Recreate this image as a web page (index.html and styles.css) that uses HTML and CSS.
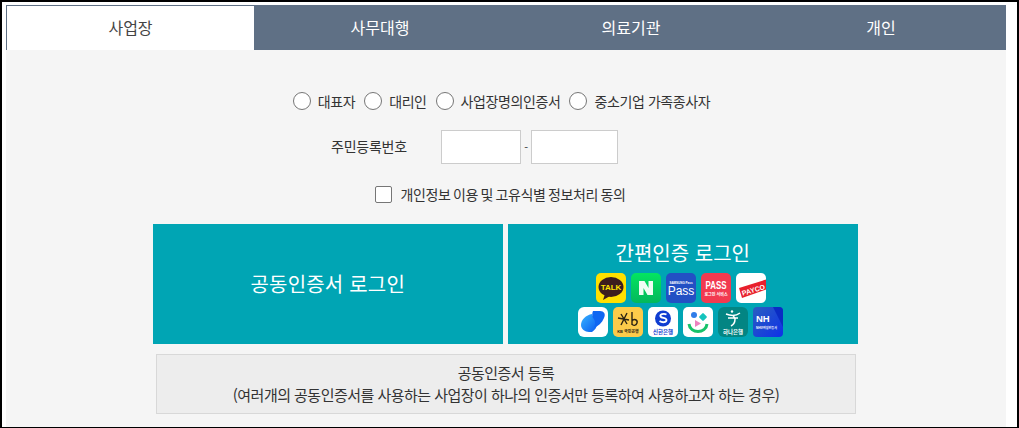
FILE: index.html
```html
<!DOCTYPE html>
<html lang="ko">
<head>
<meta charset="utf-8">
<title>로그인</title>
<link rel="stylesheet" href="styles.css">
</head>
<body>
<div class="frame">
  <div class="panel">
    <div class="tabs">
      <div class="tab active">사업장</div>
      <div class="tab">사무대행</div>
      <div class="tab">의료기관</div>
      <div class="tab">개인</div>
    </div>
    <div class="radios">
      <label class="radio"><input type="radio" name="r"><span>대표자</span></label>
      <label class="radio"><input type="radio" name="r"><span>대리인</span></label>
      <label class="radio"><input type="radio" name="r"><span>사업장명의인증서</span></label>
      <label class="radio"><input type="radio" name="r"><span>중소기업 가족종사자</span></label>
    </div>
    <div class="idrow">
      <span class="idlabel">주민등록번호</span>
      <span class="box b1"></span>
      <span class="dash">-</span>
      <span class="box b2"></span>
    </div>
    <label class="agree"><input type="checkbox"><span>개인정보 이용 및 고유식별 정보처리 동의</span></label>
    <div class="logins">
      <div class="login cert">공동인증서 로그인</div>
      <div class="login easy">
        <div class="easytitle">간편인증 로그인</div>
        <div class="icons">
          <svg class="ic" viewBox="0 0 30 30"><rect width="30" height="30" rx="5" fill="#fee000"/><ellipse cx="15" cy="14" rx="12.500" ry="10" fill="#3c1e1e"/><path d="M9 21l-2 6 7-4z" fill="#3c1e1e"/><text x="15" y="17" class="t9b y">TALK</text></svg>
          <svg class="ic" viewBox="0 0 30 30"><defs><linearGradient id="gn" x1="0" y1="0" x2="0" y2="1"><stop offset="0" stop-color="#03e560"/><stop offset="1" stop-color="#03b85c"/></linearGradient></defs><rect width="30" height="30" rx="5" fill="url(#gn)"/><path d="M8 8h5.500l4 7V8H22v14h-5.500l-4-7v7H8z" fill="#f0fdf4"/></svg>
          <svg class="ic" viewBox="0 0 30 30"><rect width="30" height="30" rx="5" fill="#2350c4"/><text x="15" y="10.500" class="t3 w">SAMSUNG Pass</text><text x="15" y="22" class="t11 w">Pass</text></svg>
          <svg class="ic" viewBox="0 0 30 30"><rect width="30" height="30" rx="5" fill="#f23a50"/><text x="15" y="16" class="t11n w" textLength="21" lengthAdjust="spacingAndGlyphs">PASS</text><text x="15" y="23" class="t4 w">로그인 서비스</text></svg>
          <svg class="ic" viewBox="0 0 30 30"><defs><clipPath id="cp"><rect width="30" height="30" rx="5"/></clipPath></defs><rect width="30" height="30" rx="5" fill="#fff"/><g clip-path="url(#cp)"><path d="M3 15L30 6.500v10L6 25z" fill="#e8202c"/><text x="17.500" y="19.500" class="t8b w" transform="rotate(-17 17.500 17)">PAYCO</text></g></svg>
        </div>
        <div class="icons">
          <svg class="ic" viewBox="0 0 30 30"><defs><linearGradient id="gt" x1="0" y1="0" x2="1" y2="1"><stop offset="0" stop-color="#38b4ff"/><stop offset="1" stop-color="#0a5cf0"/></linearGradient></defs><rect width="30" height="30" rx="6" fill="#fff"/><path d="M14 7C8 8 3 13 3 18c0 4 4 7 8 7h3c3-2 5-5 5-8 0-4-4-6-5-10z" fill="url(#gt)"/><path d="M15 4h7c4 0 6 3 4 7-2 5-6 8-10 10 2-5 1-8-1-10-1-2-1-5 0-7z" fill="#0f66f2"/></svg>
          <svg class="ic" viewBox="0 0 30 30"><rect width="30" height="30" rx="5" fill="#fccb4a"/><path d="M8 7l6 10M14 6L8 18M5 11l11 2M19 5v13M19 14c2-3 6-1 5 2s-4 3-5 1" fill="none" stroke="#2c2414" stroke-width="1.400"/><text x="15" y="26" class="t4 d">KB 국민은행</text></svg>
          <svg class="ic" viewBox="0 0 30 30"><rect width="30" height="30" rx="5" fill="#fff"/><circle cx="15" cy="11.500" r="8" fill="#0f3dd1"/><path d="M18.500 7.500c-3-1.500-7 0-6 2 1 2 6 1 6 3.500 0 2.500-4 3-7 1" fill="none" stroke="#fff" stroke-width="1.800"/><text x="15" y="26.500" class="t6 b">신한은행</text></svg>
          <svg class="ic" viewBox="0 0 30 30"><rect width="30" height="30" rx="5" fill="#fff"/><circle cx="11" cy="8" r="3" fill="#2f7de8"/><rect x="17" y="7" width="6" height="6" rx="1" fill="#15c4bd" transform="rotate(45 20 10)"/><path d="M12 13l6 3.500-6 3.500z" fill="#ee82c0"/><path d="M6 17c1 10 17 10 18 0" fill="none" stroke="#16c26a" stroke-width="3"/></svg>
          <svg class="ic" viewBox="0 0 30 30"><rect width="30" height="30" rx="6" fill="#038583"/><path d="M8 7c5 2 10 2 14-1M10 11h10M15 8l2 4c0 3-2 6-4 7" fill="none" stroke="#fff" stroke-width="1.500"/><circle cx="14" cy="4.500" r="1.200" fill="#fff"/><text x="15" y="27" class="t6 w">하나은행</text></svg>
          <svg class="ic" viewBox="0 0 30 30"><defs><linearGradient id="gh" x1="0" y1="0" x2="1" y2="1"><stop offset="0" stop-color="#2a5fc0"/><stop offset="1" stop-color="#0e30e8"/></linearGradient></defs><rect width="30" height="30" rx="4" fill="url(#gh)"/><path d="M20 0h6a4 4 0 0 1 4 4v16z" fill="#0a2cc4"/><text x="3" y="14.500" class="t10l w">NH</text><text x="3" y="21.500" class="t3l w">NH모바일인증서</text></svg>
        </div>
      </div>
    </div>
    <div class="register">
      <p>공동인증서 등록</p>
      <p>(여러개의 공동인증서를 사용하는 사업장이 하나의 인증서만 등록하여 사용하고자 하는 경우)</p>
    </div>
  </div>
</div>
</body>
</html>
```

FILE: styles.css
```css
* { box-sizing: border-box; }
html, body { margin: 0; padding: 0; background: #fff; }
body { font-family: "Noto Sans CJK KR", "Noto Sans", sans-serif; color: #333; }
.frame { width: 1019px; height: 428px; border: 2px solid #000; border-width: 2px 2px 1px 2px; padding: 3px 11px 0 4px; overflow: hidden; }
.panel { width: 1000px; height: 422px; background: #f5f5f5; display: flex; flex-direction: column; align-items: center; }
.tabs { display: flex; width: 100%; height: 45px; background: #5f7085; }
.tab { width: 250px; display: flex; align-items: center; justify-content: center; color: #fff; font-size: 16px; padding-bottom: 2px; }
.tab.active { width: 248px; background: #fff; color: #444; border: solid #5f7085; border-width: 1px 0 0 1px; }
.tab:nth-child(2) { width: 252px; }
.radios { display: flex; align-items: center; margin: 41px 9px 0 0; height: 20px; font-size: 14px; letter-spacing: -0.4px; }
.radio { display: flex; align-items: center; margin-right: 9px; }
.radio:last-child { margin-right: 0; }
.radio span { margin-left: 7px; }
input[type=radio], input[type=checkbox] { appearance: none; margin: 0; background: #fff; border: 1px solid #767676; }
input[type=radio] { width: 18px; height: 18px; border-radius: 50%; }
input[type=checkbox] { width: 17px; height: 17px; border-radius: 2px; }
.idrow { display: flex; align-items: center; align-self: flex-start; margin: 18px 0 0 325px; height: 35px; font-size: 14px; letter-spacing: -0.25px; }
.idlabel { width: 110px; padding-bottom: 2px; }
.box { display: block; height: 34px; background: #fff; border: 1px solid #ccc; }
.b1 { width: 80px; }
.b2 { width: 87px; }
.dash { width: 10px; text-align: center; font-size: 11px; }
.agree { display: flex; align-items: center; margin: 21px 12px 0 0; height: 18px; font-size: 14px; letter-spacing: -0.4px; word-spacing: -1px; }
.agree span { margin-left: 9px; }
.logins { display: flex; gap: 5px; margin: 21px 1.500px 0 0; height: 120px; }
.login { width: 350px; background: #00a5b4; color: #fff; display: flex; flex-direction: column; align-items: center; }
.cert { justify-content: center; font-size: 20px; letter-spacing: 0.2px; padding-bottom: 2px; }
.easytitle { font-size: 20px; height: 49px; line-height: 27px; padding-top: 15px; }
.icons { display: flex; gap: 5px; height: 34px; padding-right: 4px; }
.ic { width: 30px; height: 30px; display: block; }
.register { width: 700px; height: 60px; margin-top: 10px; background: #ededed; border: 1px solid #d8d8d8; display: flex; flex-direction: column; align-items: center; justify-content: center; font-size: 15px; letter-spacing: -0.53px; line-height: 22px; }
.register p { margin: 0; }
svg text { font-family: "Liberation Sans", "Noto Sans CJK KR", sans-serif; text-anchor: middle; font-weight: 700; letter-spacing: 0; word-spacing: 0; }
.t3 { font-size: 3px; } .t4 { font-size: 4px; } .t6 { font-size: 5.500px; }
.t8b { font-size: 7px; } .t9b { font-size: 8px; }
.t11 { font-size: 12px; font-weight: 400; } .t11n { font-size: 11px; }
.t10l { font-size: 9.500px; text-anchor: start; } .t3l { font-size: 3px; text-anchor: start; }
.w { fill: #fff; } .y { fill: #fee500; } .d { fill: #2c2414; } .b { fill: #0f3dd1; }
```
